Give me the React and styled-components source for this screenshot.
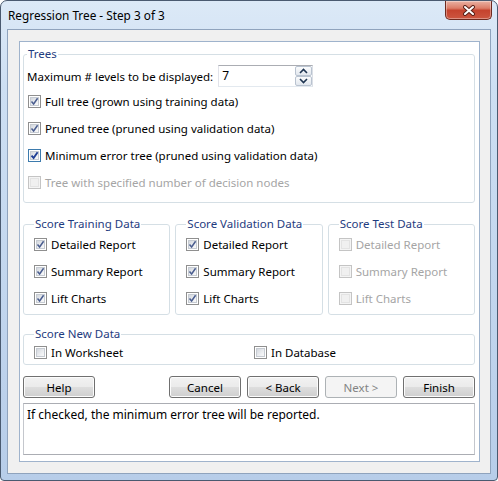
import React from 'react';
import styled, { createGlobalStyle } from 'styled-components';

const GlobalStyle = createGlobalStyle`
  body {
    margin: 0;
    background: #ffffff;
    font-family: "Segoe UI", "Noto Sans", "Open Sans", sans-serif;
    font-size: 11.5px;
  }
`;

const Window = styled.div`
  box-sizing: border-box;
  width: 498px;
  height: 481px;
  border: 1px solid #4a5a70;
  border-radius: 7px 7px 4px 4px;
  background: linear-gradient(180deg, #dce9f7 0%, #cddff3 18%, #c2d6ee 60%, #b7cde9 100%);
  display: flex;
  flex-direction: column;
  overflow: hidden;
`;

const TitleBar = styled.div`
  height: 28px;
  flex: none;
  display: flex;
  align-items: flex-start;
  justify-content: space-between;
`;

const Title = styled.span`
  color: #000;
  font-size: 11.8px;
  line-height: 15px;
  margin: 7px 0 0 7px;
`;

const CloseButton = styled.div`
  box-sizing: border-box;
  width: 47px;
  height: 19px;
  margin-right: 5px;
  border: 1px solid #6e2a1f;
  border-top: none;
  border-radius: 0 0 5px 5px;
  background: linear-gradient(180deg, #eab2a4 0%, #dc7d68 40%, #c5432e 52%, #cc5640 100%);
  box-shadow: inset 0 0 0 1px rgba(255, 255, 255, 0.35);
  display: flex;
  align-items: center;
  justify-content: center;
`;

const Client = styled.div`
  flex: 1;
  margin: 0 6px 6px 6px;
  border: 1px solid #8fa3bd;
  background: #f0f0f0;
  padding: 11px 10px 11px 11px;
  display: flex;
`;

const Panel = styled.div`
  flex: 1;
  background: #ffffff;
  border: 1px solid #9fb3cc;
  padding: 5px 4px 6px 3px;
  display: flex;
  flex-direction: column;
`;

const Group = styled.fieldset`
  margin: ${({ $top }) => $top || 0}px 0 0 0;
  min-width: 0;
  border: 1px solid #d5dfe5;
  border-radius: 3px;
  padding: 0 4px ${({ $bottom }) => $bottom || 0}px ${({ $left }) => $left || 3}px;
`;

const Legend = styled.legend`
  padding: 0 1px;
  font-size: 11.5px;
  line-height: 14px;
  color: #1f3c80;
`;

const LevelRow = styled.div`
  display: flex;
  align-items: center;
  height: 22px;
  margin: 4px 0 1px;
  gap: 5px;
  color: #000;
`;

const SpinBox = styled.div`
  box-sizing: border-box;
  width: 95px;
  height: 22px;
  border: 1px solid #abadb3;
  border-left-color: #e2e3ea;
  border-right-color: #dbdfe6;
  border-bottom-color: #e3e9ef;
  display: flex;
  background: #fff;
`;

const SpinValue = styled.span`
  flex: 1;
  padding-left: 3px;
  line-height: 20px;
  font-size: 12px;
`;

const SpinButtons = styled.div`
  width: 17px;
  display: flex;
  flex-direction: column;
`;

const SpinButton = styled.div`
  flex: 1;
  box-sizing: border-box;
  border: 1px solid #b9c3d0;
  border-radius: 2px;
  background: linear-gradient(180deg, #fbfcfd 0%, #eef1f5 50%, #e2e7ee 100%);
  display: flex;
  align-items: center;
  justify-content: center;
`;

const CheckRow = styled.label`
  display: flex;
  align-items: center;
  gap: 4px;
  height: ${({ $h }) => $h || 27}px;
  padding-left: ${({ $pad }) => $pad || 0}px;
  color: ${({ $disabled }) => ($disabled ? '#a5a5a5' : '#000')};
  white-space: nowrap;
`;

const Box = styled.span`
  box-sizing: border-box;
  width: 13px;
  height: 13px;
  flex: none;
  border: 1px solid ${({ $hot, $disabled }) => ($hot ? '#3d7bad' : $disabled ? '#c4c4c4' : '#8f8f8f')};
  background: ${({ $disabled }) => ($disabled ? '#f4f4f4' : '#fff')};
  padding: 1px;
  display: flex;
`;

const BoxInner = styled.span`
  flex: 1;
  background: ${({ $disabled }) =>
    $disabled
      ? '#f0f0f0'
      : 'linear-gradient(135deg, #d3d7dd 0%, #eceef1 60%, #f9f9f9 100%)'};
  border: 1px solid ${({ $disabled }) => ($disabled ? '#e3e3e3' : '#c6cbd2')};
  position: relative;
  display: flex;
  align-items: center;
  justify-content: center;
`;

const ScoreRow = styled.div`
  display: grid;
  grid-template-columns: 1fr 1fr 1fr;
  gap: 5px;
  margin-top: 14px;
`;

const NewDataGrid = styled.div`
  display: grid;
  grid-template-columns: 220px 1fr;
`;

const ButtonBar = styled.div`
  display: flex;
  margin-top: 11px;
  gap: 6px;
`;

const Spacer = styled.div`
  flex: 1;
`;

const Button = styled.div`
  box-sizing: border-box;
  width: 72px;
  height: 22px;
  border: 1px solid ${({ $disabled }) => ($disabled ? '#adb2b5' : '#707070')};
  border-radius: 3px;
  background: ${({ $disabled }) =>
    $disabled
      ? '#f4f4f4'
      : 'linear-gradient(180deg, #f2f2f2 0%, #ebebeb 48%, #dddddd 52%, #cfcfcf 100%)'};
  box-shadow: inset 0 0 0 1px ${({ $disabled }) => ($disabled ? '#f4f4f4' : '#fcfcfc')};
  color: ${({ $disabled }) => ($disabled ? '#838383' : '#000')};
  display: flex;
  align-items: center;
  justify-content: center;
`;

const Description = styled.div`
  flex: 1;
  margin-top: 5px;
  box-sizing: border-box;
  border: 1px solid #abadb3;
  border-left-color: #c4c7cd;
  border-right-color: #c4c7cd;
  padding: 3px 3px;
  color: #000;
  font-size: 12px;
  line-height: 15px;
`;

function Checkbox({ checked, hot, disabled }) {
  return (
    <Box $hot={hot} $disabled={disabled}>
      <BoxInner $disabled={disabled}>
        {checked && (
          <svg width="9" height="9" viewBox="0 0 9 9" style={{ position: 'absolute', left: -1, top: -1 }}>
            <path
              d="M1.5 4.6 L3.6 7 L7.6 1.2"
              fill="none"
              stroke={hot ? '#1f3f95' : '#4a5d8f'}
              strokeWidth={hot ? 1.9 : 1.5}
            />
          </svg>
        )}
      </BoxInner>
    </Box>
  );
}

function Check({ label, checked, hot, disabled, h, pad }) {
  return (
    <CheckRow $disabled={disabled} $h={h} $pad={pad}>
      <Checkbox checked={checked} hot={hot} disabled={disabled} />
      {label}
    </CheckRow>
  );
}

function ScoreGroup({ title, disabled }) {
  return (
    <Group $left={10} $bottom={2}>
      <Legend>{title}</Legend>
      <Check label="Detailed Report" checked={!disabled} disabled={disabled} />
      <Check label="Summary Report" checked={!disabled} disabled={disabled} />
      <Check label="Lift Charts" checked={!disabled} disabled={disabled} />
    </Group>
  );
}

const Arrow = ({ up }) => (
  <svg width="9" height="6" viewBox="0 0 9 6">
    <path d={up ? 'M1 5 L4.5 1.5 L8 5' : 'M1 1 L4.5 4.5 L8 1'} fill="none" stroke="#1f3552" strokeWidth="1.6" />
  </svg>
);

export default function App() {
  return (
    <>
      <GlobalStyle />
      <Window>
        <TitleBar>
          <Title>Regression Tree - Step 3 of 3</Title>
          <CloseButton>
            <svg width="14" height="11" viewBox="0 0 14 11">
              <path d="M3 2 L11 9 M11 2 L3 9" stroke="#5a2118" strokeWidth="4" strokeLinecap="round" />
              <path d="M3 2 L11 9 M11 2 L3 9" stroke="#ffffff" strokeWidth="2" strokeLinecap="round" />
            </svg>
          </CloseButton>
        </TitleBar>
        <Client>
          <Panel>
            <Group $left={3} $bottom={6}>
              <Legend>Trees</Legend>
              <LevelRow>
                <span>Maximum # levels to be displayed:</span>
                <SpinBox>
                  <SpinValue>7</SpinValue>
                  <SpinButtons>
                    <SpinButton><Arrow up /></SpinButton>
                    <SpinButton><Arrow /></SpinButton>
                  </SpinButtons>
                </SpinBox>
              </LevelRow>
              <Check pad={1} label="Full tree (grown using training data)" checked />
              <Check pad={1} label="Pruned tree (pruned using validation data)" checked />
              <Check pad={1} label="Minimum error tree (pruned using validation data)" checked hot />
              <Check pad={1} label="Tree with specified number of decision nodes" disabled />
            </Group>
            <ScoreRow>
              <ScoreGroup title="Score Training Data" />
              <ScoreGroup title="Score Validation Data" />
              <ScoreGroup title="Score Test Data" disabled />
            </ScoreRow>
            <Group $top={12} $left={10} $bottom={1}>
              <Legend>Score New Data</Legend>
              <NewDataGrid>
                <Check h={22} label="In Worksheet" />
                <Check h={22} label="In Database" />
              </NewDataGrid>
            </Group>
            <ButtonBar>
              <Button>Help</Button>
              <Spacer />
              <Button>Cancel</Button>
              <Button>&lt; Back</Button>
              <Button $disabled>Next &gt;</Button>
              <Button>Finish</Button>
            </ButtonBar>
            <Description>If checked, the minimum error tree will be reported.</Description>
          </Panel>
        </Client>
      </Window>
    </>
  );
}
